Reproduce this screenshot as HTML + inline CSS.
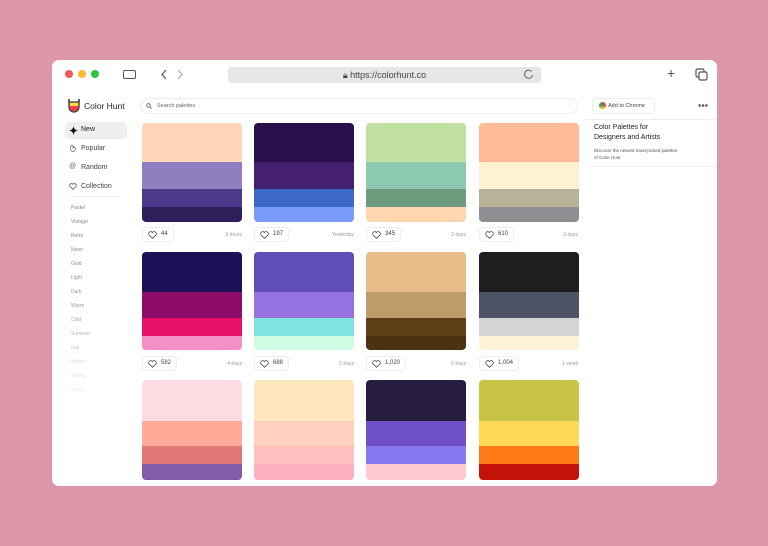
<!DOCTYPE html><html><head><meta charset="utf-8"><style>
*{margin:0;padding:0;box-sizing:border-box}
body{width:768px;height:546px;background:#DC98A8;font-family:"Liberation Sans",sans-serif;position:relative;overflow:hidden}
.win{position:absolute;left:52px;top:60px;width:665px;height:426px;background:#fff;border-radius:7px;overflow:hidden}
.a{position:absolute}
.dot{position:absolute;top:10px;width:8px;height:8px;border-radius:50%}
.pal{position:absolute;width:100px;border-radius:4px;overflow:hidden}
.pal div{width:100%}
.like{position:absolute;height:15px;border:1px solid #eee;border-radius:4px;font-size:6px;color:#444;padding:0 5px 0 18px;line-height:13px}
.like svg{position:absolute;left:5px;top:3px}
.time{position:absolute;font-size:5px;color:#999;text-align:right;width:60px}
.nav{position:absolute;left:69px;font-size:7px;color:#444}
.tag{position:absolute;left:71px;font-size:5px}
</style></head><body>
<div class="win">
<div class="dot" style="left:13px;background:#F25A55"></div>
<div class="dot" style="left:26px;background:#F8BB2E"></div>
<div class="dot" style="left:39px;background:#2BC640"></div>
<div class="a" style="left:71px;top:10px;width:13px;height:9px;border:1.2px solid #555;border-radius:2px"></div>
<svg class="a" style="left:108px;top:9px" width="8" height="11" viewBox="0 0 8 11"><path d="M6 1L2 5.5L6 10" fill="none" stroke="#555" stroke-width="1.2"/></svg>
<svg class="a" style="left:124px;top:9px" width="8" height="11" viewBox="0 0 8 11"><path d="M2 1L6 5.5L2 10" fill="none" stroke="#aaa" stroke-width="1.2"/></svg>
<div class="a" style="left:176px;top:7px;width:313px;height:16px;background:#E6E6E6;border-radius:3px;font-size:9px;color:#444;text-align:center;line-height:16px">🔒︎ https://colorhunt.co</div>
<svg class="a" style="left:471px;top:9px" width="11" height="11" viewBox="0 0 11 11"><path d="M8.5 2.5A4 4 0 1 0 9.5 6" fill="none" stroke="#666" stroke-width="1"/></svg>
<div class="a" style="left:615px;top:5px;font-size:14px;color:#555">+</div>
<svg class="a" style="left:643px;top:8px" width="13" height="13" viewBox="0 0 13 13"><rect x="1" y="1" width="8" height="8" rx="1.5" fill="none" stroke="#555" stroke-width="1.2"/><rect x="4" y="4" width="8" height="8" rx="1.5" fill="#fff" stroke="#555" stroke-width="1.2"/></svg>

<!-- logo -->
<svg class="a" style="left:15px;top:38px" width="14" height="15" viewBox="0 0 14 15"><path d="M2 1V4M12 1V4" stroke="#333" stroke-width="1.5"/><path d="M2 4H12V9A5 5 0 0 1 2 9Z" fill="#FFD83A" stroke="#333" stroke-width="1.3"/><path d="M2.7 8H11.3V9A4.3 4.3 0 0 1 2.7 9Z" fill="#F23A5A"/></svg>
<div class="a" style="left:32px;top:41px;font-size:8.5px;color:#222">Color Hunt</div>
<div class="a" style="left:88px;top:38px;width:438px;height:16px;border:1px solid #eee;border-radius:8px;font-size:5.5px;color:#666;padding:4px 0 0 16px">Search palettes</div>
<svg class="a" style="left:94px;top:43px" width="6" height="6" viewBox="0 0 6 6"><circle cx="2.5" cy="2.5" r="1.8" fill="none" stroke="#555" stroke-width=".8"/><path d="M4 4L5.6 5.6" stroke="#555" stroke-width=".8"/></svg>

<div class="a" style="left:13px;top:62px;width:62px;height:17px;background:#EFEFEF;border-radius:4px"></div>
<svg class="a" style="left:17px;top:66px" width="9" height="9" viewBox="0 0 9 9"><path d="M4.5 0Q5 4 9 4.5Q5 5 4.5 9Q4 5 0 4.5Q4 4 4.5 0Z" fill="#111"/></svg>
<div class="nav" style="left:29px;top:66px;color:#222">New</div>
<svg class="a" style="left:17px;top:84px" width="8" height="9" viewBox="0 0 8 9"><path d="M3 1Q1 3 1.5 5.5A2.6 2.6 0 0 0 6.5 5.5Q6.5 3.5 5 2.5Q5 4 4 4Q4.5 2 3 1Z" fill="none" stroke="#666" stroke-width=".7"/></svg>
<div class="nav" style="left:29px;top:85px">Popular</div>
<div class="a" style="left:17px;top:103px;font-size:7px;color:#666">@</div>
<div class="nav" style="left:29px;top:104px">Random</div>
<svg class="a" style="left:17px;top:123px" width="8" height="7" viewBox="0 0 9 8"><path d="M4.5 7.3L1.1 4A1.9 1.9 0 0 1 4.5 1.5A1.9 1.9 0 0 1 7.9 4Z" fill="none" stroke="#555" stroke-width=".9"/></svg>
<div class="nav" style="left:29px;top:123px">Collection</div>
<div class="a" style="left:18px;top:136px;width:50px;height:1px;background:#eee"></div>
<div class="tag" style="left:19px;top:145px;color:#888">Pastel</div>
<div class="tag" style="left:19px;top:159px;color:#888">Vintage</div>
<div class="tag" style="left:19px;top:173px;color:#8a8a8a">Retro</div>
<div class="tag" style="left:19px;top:187px;color:#8c8c8c">Neon</div>
<div class="tag" style="left:19px;top:201px;color:#909090">Gold</div>
<div class="tag" style="left:19px;top:215px;color:#949494">Light</div>
<div class="tag" style="left:19px;top:229px;color:#999">Dark</div>
<div class="tag" style="left:19px;top:243px;color:#a0a0a0">Warm</div>
<div class="tag" style="left:19px;top:257px;color:#aaa">Cold</div>
<div class="tag" style="left:19px;top:271px;color:#b8b8b8">Summer</div>
<div class="tag" style="left:19px;top:285px;color:#ccc">Fall</div>
<div class="tag" style="left:19px;top:299px;color:#ddd">Winter</div>
<div class="tag" style="left:19px;top:313px;color:#e6e6e6">Spring</div>
<div class="tag" style="left:19px;top:327px;color:#eee">Happy</div>

<div class="pal" style="left:90px;top:63px"><div style="height:39px;background:#FFD6B8"></div><div style="height:27px;background:#8F7EC0"></div><div style="height:18px;background:#4B3A8A"></div><div style="height:15px;background:#2E1E5A"></div></div>
<div class="pal" style="left:202px;top:63px"><div style="height:39px;background:#2A0F4A"></div><div style="height:27px;background:#45206E"></div><div style="height:18px;background:#3C69C7"></div><div style="height:15px;background:#7C9BF8"></div></div>
<div class="pal" style="left:314px;top:63px"><div style="height:39px;background:#BFE0A0"></div><div style="height:27px;background:#8DC8B0"></div><div style="height:18px;background:#6E9A7E"></div><div style="height:15px;background:#FFD6B0"></div></div>
<div class="pal" style="left:427px;top:63px"><div style="height:39px;background:#FFBA98"></div><div style="height:27px;background:#FFF2D2"></div><div style="height:18px;background:#B8B398"></div><div style="height:15px;background:#8E8E92"></div></div>
<div class="pal" style="left:90px;top:192px"><div style="height:40px;background:#1C1058"></div><div style="height:26px;background:#8E0C68"></div><div style="height:18px;background:#E8106A"></div><div style="height:14px;background:#F490C8"></div></div>
<div class="pal" style="left:202px;top:192px"><div style="height:40px;background:#5E4EB6"></div><div style="height:26px;background:#9572E0"></div><div style="height:18px;background:#7DE4E0"></div><div style="height:14px;background:#CFFCE2"></div></div>
<div class="pal" style="left:314px;top:192px"><div style="height:40px;background:#E6BC88"></div><div style="height:26px;background:#BE9C6A"></div><div style="height:18px;background:#5E3F18"></div><div style="height:14px;background:#4A3212"></div></div>
<div class="pal" style="left:427px;top:192px"><div style="height:40px;background:#1E1E20"></div><div style="height:26px;background:#4E5366"></div><div style="height:18px;background:#D4D4D6"></div><div style="height:14px;background:#FFF2D6"></div></div>
<div class="pal" style="left:90px;top:320px"><div style="height:41px;background:#FFDCE4"></div><div style="height:25px;background:#FFAA98"></div><div style="height:18px;background:#E07878"></div><div style="height:16px;background:#845CA8"></div></div>
<div class="pal" style="left:202px;top:320px"><div style="height:41px;background:#FFE8C0"></div><div style="height:25px;background:#FFD0C0"></div><div style="height:18px;background:#FFC0C0"></div><div style="height:16px;background:#FFB0C0"></div></div>
<div class="pal" style="left:314px;top:320px"><div style="height:41px;background:#261C3E"></div><div style="height:25px;background:#7050C8"></div><div style="height:18px;background:#8878F0"></div><div style="height:16px;background:#FFCAD0"></div></div>
<div class="pal" style="left:427px;top:320px"><div style="height:41px;background:#C8C448"></div><div style="height:25px;background:#FFD858"></div><div style="height:18px;background:#FF7A14"></div><div style="height:16px;background:#C41208"></div></div>

<div class="like" style="left:90px;top:167px"><svg width="9" height="8" viewBox="0 0 9 8"><path d="M4.5 7.3L1.1 4A1.9 1.9 0 0 1 4.5 1.5A1.9 1.9 0 0 1 7.9 4Z" fill="none" stroke="#444" stroke-width=".8"/></svg>44</div><div class="time" style="left:130px;top:172px">9 hours</div>
<div class="like" style="left:202px;top:167px"><svg width="9" height="8" viewBox="0 0 9 8"><path d="M4.5 7.3L1.1 4A1.9 1.9 0 0 1 4.5 1.5A1.9 1.9 0 0 1 7.9 4Z" fill="none" stroke="#444" stroke-width=".8"/></svg>197</div><div class="time" style="left:242px;top:172px">Yesterday</div>
<div class="like" style="left:314px;top:167px"><svg width="9" height="8" viewBox="0 0 9 8"><path d="M4.5 7.3L1.1 4A1.9 1.9 0 0 1 4.5 1.5A1.9 1.9 0 0 1 7.9 4Z" fill="none" stroke="#444" stroke-width=".8"/></svg>345</div><div class="time" style="left:354px;top:172px">2 days</div>
<div class="like" style="left:427px;top:167px"><svg width="9" height="8" viewBox="0 0 9 8"><path d="M4.5 7.3L1.1 4A1.9 1.9 0 0 1 4.5 1.5A1.9 1.9 0 0 1 7.9 4Z" fill="none" stroke="#444" stroke-width=".8"/></svg>610</div><div class="time" style="left:466px;top:172px">3 days</div>
<div class="like" style="left:90px;top:296px"><svg width="9" height="8" viewBox="0 0 9 8"><path d="M4.5 7.3L1.1 4A1.9 1.9 0 0 1 4.5 1.5A1.9 1.9 0 0 1 7.9 4Z" fill="none" stroke="#444" stroke-width=".8"/></svg>582</div><div class="time" style="left:130px;top:301px">4 days</div>
<div class="like" style="left:202px;top:296px"><svg width="9" height="8" viewBox="0 0 9 8"><path d="M4.5 7.3L1.1 4A1.9 1.9 0 0 1 4.5 1.5A1.9 1.9 0 0 1 7.9 4Z" fill="none" stroke="#444" stroke-width=".8"/></svg>688</div><div class="time" style="left:242px;top:301px">5 days</div>
<div class="like" style="left:314px;top:296px"><svg width="9" height="8" viewBox="0 0 9 8"><path d="M4.5 7.3L1.1 4A1.9 1.9 0 0 1 4.5 1.5A1.9 1.9 0 0 1 7.9 4Z" fill="none" stroke="#444" stroke-width=".8"/></svg>1,020</div><div class="time" style="left:354px;top:301px">6 days</div>
<div class="like" style="left:427px;top:296px"><svg width="9" height="8" viewBox="0 0 9 8"><path d="M4.5 7.3L1.1 4A1.9 1.9 0 0 1 4.5 1.5A1.9 1.9 0 0 1 7.9 4Z" fill="none" stroke="#444" stroke-width=".8"/></svg>1,004</div><div class="time" style="left:466px;top:301px">1 week</div>

<div class="a" style="left:540px;top:38px;width:63px;height:16px;border:1px solid #eee;border-radius:4px;font-size:5.5px;color:#444;padding:4px 0 0 15px">Add to Chrome</div>
<div class="a" style="left:547px;top:42px;width:7px;height:7px;border-radius:50%;background:conic-gradient(#EA4335 0 33%,#FBBC05 33% 66%,#34A853 66%);"></div>
<div class="a" style="left:549.5px;top:44.5px;width:2px;height:2px;border-radius:50%;background:#4285F4"></div>
<div class="a" style="left:646px;top:44px;width:10px;height:3px;background:radial-gradient(circle,#555 1.2px,transparent 1.4px) 0 0/3.4px 3px repeat-x"></div>
<div class="a" style="left:533px;top:59px;width:132px;height:1px;background:#eee"></div>
<div class="a" style="left:542px;top:63px;font-size:7px;line-height:10px;color:#222">Color Palettes for<br>Designers and Artists</div>
<div class="a" style="left:542px;top:87px;font-size:4.5px;line-height:7px;color:#555">Discover the newest hand-picked palettes<br>of Color Hunt</div>
<div class="a" style="left:540px;top:106px;width:125px;height:1px;background:#f0f0f0"></div>
</div>
</body></html>
